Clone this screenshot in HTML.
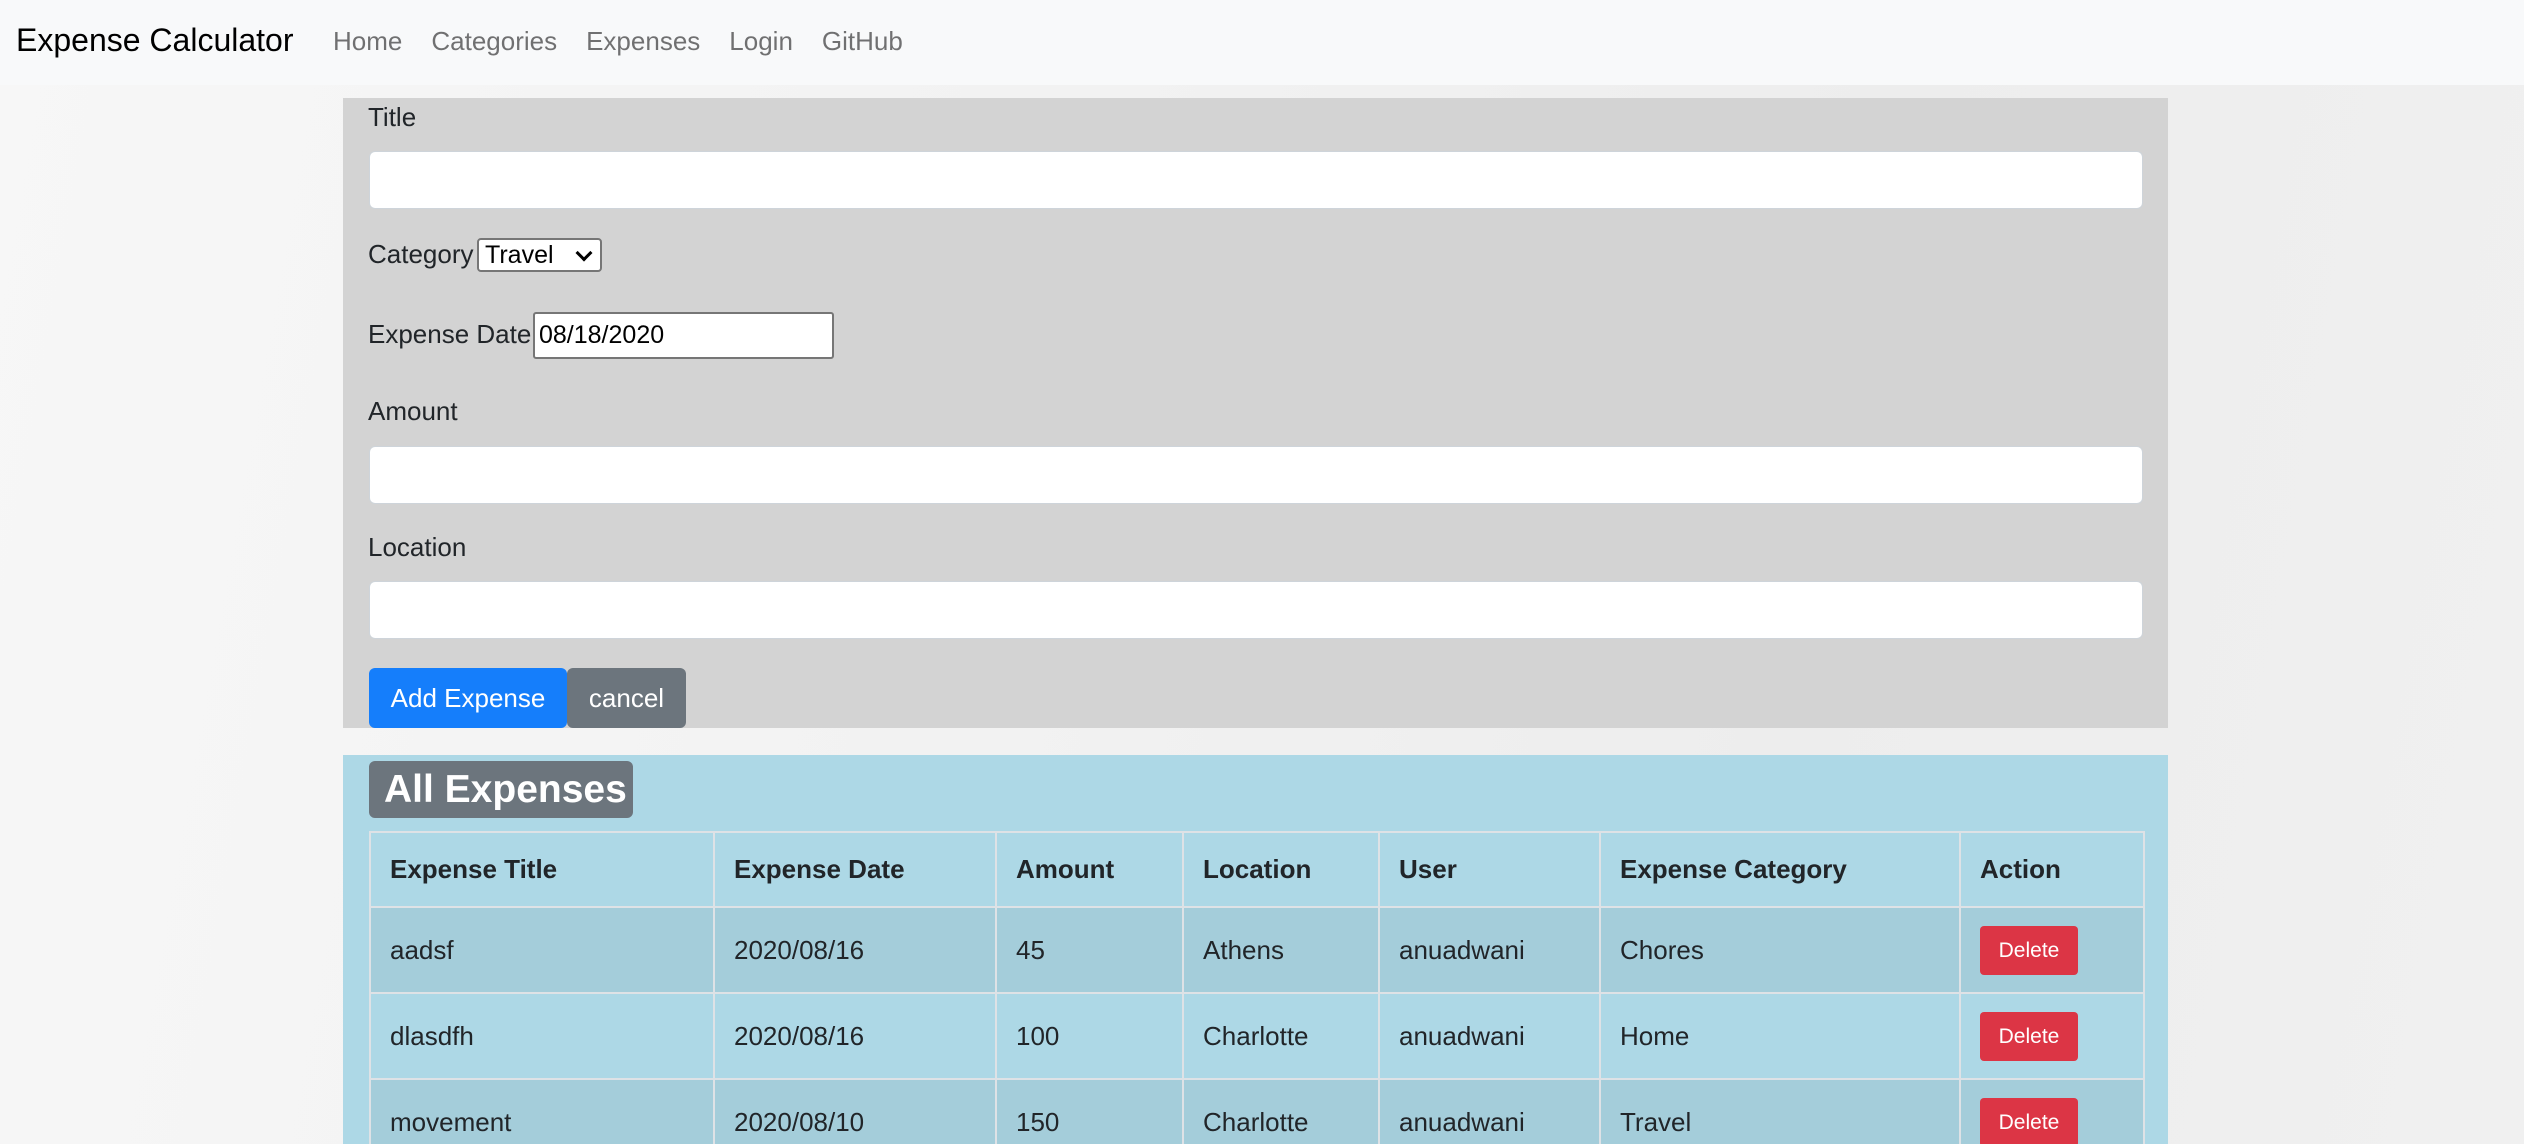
<!DOCTYPE html>
<html><head><meta charset="utf-8"><style>
*{box-sizing:border-box;margin:0;padding:0}
body{width:2524px;height:1144px;overflow:hidden;font-family:"Liberation Sans",sans-serif;color:#212529;background:linear-gradient(100deg,#f7f7f7 0%,#f2f2f2 40%,#ededed 70%,#f0f0f0 100%);position:relative}
.nav{position:absolute;left:0;top:0;width:2524px;height:85px;background:#f8f9fa}
.brand{position:absolute;left:16px;top:22px;font-size:32px;color:#000}
.links{position:absolute;left:333px;top:26px;font-size:26px;color:rgba(0,0,0,.55);white-space:nowrap}
.links span{margin-right:29px}
.form{position:absolute;left:343px;top:98px;width:1825px;height:630px;background:#d3d3d3}
.lbl{position:absolute;left:25px;font-size:26px}
.inp{position:absolute;left:26px;width:1774px;height:58px;background:#fff;border:1px solid #ced4da;border-radius:6px}
.sel{position:absolute;left:134px;top:140px;width:125px;height:34px;background:#fff;border:2px solid #767676;border-radius:4px;font-size:25px;padding:0 6px;line-height:30px;color:#000}
.sel:after{content:"";position:absolute;right:10px;top:7px;width:9px;height:9px;border-right:3px solid #000;border-bottom:3px solid #000;transform:rotate(45deg)}
.date{position:absolute;left:190px;top:214px;width:301px;height:47px;background:#fff;border:2px solid #767676;border-radius:3px;font-size:25px;padding:0 4px;line-height:43px;color:#000}
.btn{position:absolute;top:570px;height:60px;color:#fff;font-size:26px;line-height:60px;text-align:center;border-radius:6px}
.tp{position:absolute;left:343px;top:755px;width:1825px;height:389px;background:#add8e6;overflow:hidden}
.badge{position:absolute;left:26px;top:6px;width:264px;height:57px;background:#6c757d;border-radius:6px;color:#fff;font-weight:bold;font-size:39px;line-height:57px;padding-left:15px}
table{position:absolute;left:26px;top:76px;border-collapse:collapse;table-layout:fixed;font-size:26px}
td,th{border:2px solid #dee2e6;padding:0 19px;text-align:left;height:86px}
th{height:75px;font-weight:bold}
tr.s td{background:rgba(0,0,0,.05)}
.del{display:inline-block;background:#dc3545;color:#fff;font-size:21px;border-radius:4px;width:98px;height:49px;line-height:49px;text-align:center}
</style></head><body>
<div class="nav"><div class="brand">Expense Calculator</div>
<div class="links"><span>Home</span><span>Categories</span><span>Expenses</span><span>Login</span><span>GitHub</span></div></div>
<div class="form">
<div class="lbl" style="top:4px">Title</div>
<div class="inp" style="top:53px"></div>
<div class="lbl" style="top:141px">Category</div>
<div class="sel">Travel</div>
<div class="lbl" style="top:221px">Expense Date</div>
<div class="date">08/18/2020</div>
<div class="lbl" style="top:298px">Amount</div>
<div class="inp" style="top:348px"></div>
<div class="lbl" style="top:434px">Location</div>
<div class="inp" style="top:483px"></div>
<div class="btn" style="left:26px;width:198px;background:#157efb">Add Expense</div>
<div class="btn" style="left:224px;width:119px;background:#6c757d">cancel</div>
</div>
<div class="tp">
<div class="badge">All Expenses</div>
<table>
<colgroup><col style="width:344px"><col style="width:282px"><col style="width:187px"><col style="width:196px"><col style="width:221px"><col style="width:360px"><col style="width:184px"></colgroup>
<tr><th>Expense Title</th><th>Expense Date</th><th>Amount</th><th>Location</th><th>User</th><th>Expense Category</th><th>Action</th></tr>
<tr class="s"><td>aadsf</td><td>2020/08/16</td><td>45</td><td>Athens</td><td>anuadwani</td><td>Chores</td><td><span class="del">Delete</span></td></tr>
<tr><td>dlasdfh</td><td>2020/08/16</td><td>100</td><td>Charlotte</td><td>anuadwani</td><td>Home</td><td><span class="del">Delete</span></td></tr>
<tr class="s"><td>movement</td><td>2020/08/10</td><td>150</td><td>Charlotte</td><td>anuadwani</td><td>Travel</td><td><span class="del">Delete</span></td></tr>
</table>
</div>
</body></html>
